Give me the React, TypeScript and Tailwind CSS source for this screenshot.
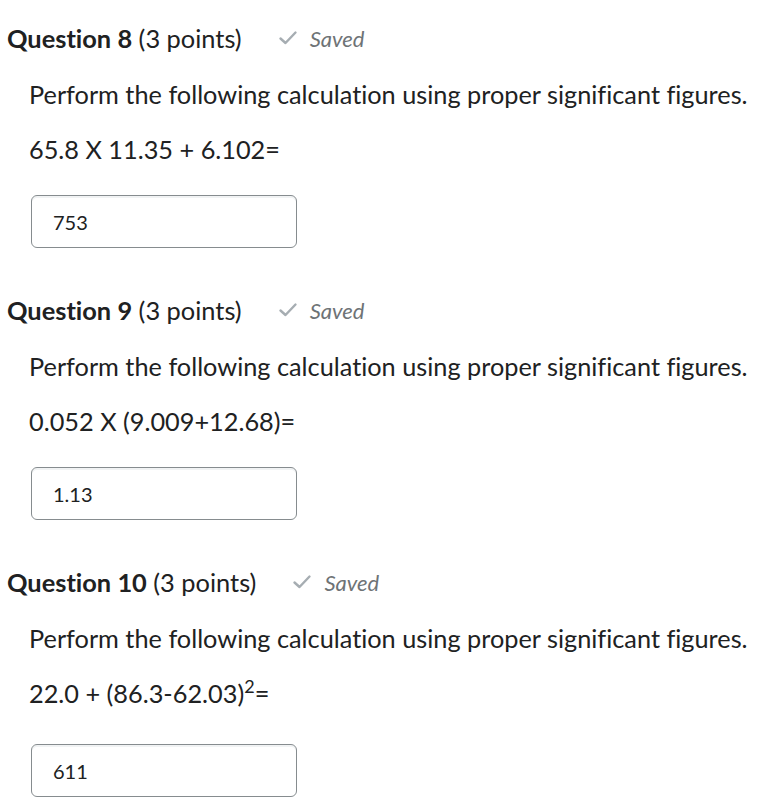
import React from "react";

type Q = { num: number; expr: React.ReactNode; answer: string; tall?: boolean };

const questions: Q[] = [
  { num: 8, expr: <>65.8 X 11.35 + 6.102=</>, answer: "753" },
  { num: 9, expr: <>0.052 X (9.009+12.68)=</>, answer: "1.13" },
  {
    num: 10,
    expr: (
      <>
        22.0 + (86.3-62.03)<sup className="text-[18px] top-0 align-[10px] leading-none">2</sup>=
      </>
    ),
    answer: "611",
    tall: true,
  },
];

function Check() {
  return (
    <svg width="20" height="16" viewBox="0 0 20 16" fill="none">
      <path d="M2.5 8.5 L7.5 13 L17.5 2.5" stroke="#a6adb2" strokeWidth="2.4" strokeLinecap="round" strokeLinejoin="round" />
    </svg>
  );
}

function Question({ q }: { q: Q }) {
  return (
    <div className="pb-[43px]">
      <div className="flex items-center h-[38px]">
        <h2 className="text-[25.4px] text-[#202122]">
          <span className="font-bold">Question {q.num}</span> (3 points)
        </h2>
        <div className="flex items-center gap-[12px] ml-[36px] text-[#6e7376] italic text-[22px]">
          <Check />
          <span>Saved</span>
        </div>
      </div>
      <div className="pl-[22px] text-[25.3px] text-[#202122]">
        <p className="mt-[19px] leading-[36px]">Perform the following calculation using proper significant figures.</p>
        <p className="mt-[19px] leading-[36px]">{q.expr}</p>
        <div className={q.tall ? "mt-[33px] pl-[2px]" : "mt-[28px] pl-[2px]"}>
          <input
            readOnly
            value={q.answer}
            className="w-[266px] h-[53px] rounded-[6px] border border-[#868c8f] px-[21px] text-[20px] text-[#202122] shadow-[inset_0_2px_0_0_#f1f3f4] outline-none"
          />
        </div>
      </div>
    </div>
  );
}

export default function App() {
  return (
    <div
      className="bg-white min-h-screen pl-[7px] pt-[19px] [font-variant-ligatures:none]"
      style={{ fontFamily: "Lato, 'Noto Sans', sans-serif" }}
    >
      {questions.map((q) => (
        <Question key={q.num} q={q} />
      ))}
    </div>
  );
}
